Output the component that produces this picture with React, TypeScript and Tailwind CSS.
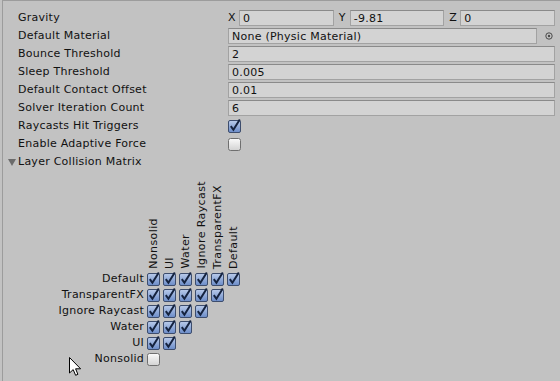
import React from 'react';

const LAYERS = ['Default', 'TransparentFX', 'Ignore Raycast', 'Water', 'UI', 'Nonsolid'];

function Checkbox({ checked }: { checked: boolean }) {
  if (checked) {
    return (
      <svg width="13" height="13" viewBox="0 0 13 13" className="block shrink-0 overflow-visible">
        <defs>
          <linearGradient id="cbOn" x1="0" y1="0" x2="0" y2="1">
            <stop offset="0" stopColor="#b9cbea" />
            <stop offset="1" stopColor="#6a8bc8" />
          </linearGradient>
        </defs>
        <rect x="0.5" y="0.5" width="12" height="12" rx="1.5" fill="url(#cbOn)" stroke="#3d4d6d" />
        <path d="M2.8 6.2 L5.4 9.8 L11.8 -0.6" fill="none" stroke="#15233f" strokeWidth="2" strokeLinejoin="miter" />
      </svg>
    );
  }
  return (
    <svg width="13" height="13" viewBox="0 0 13 13" className="block shrink-0">
      <defs>
        <linearGradient id="cbOff" x1="0" y1="0" x2="0" y2="1">
          <stop offset="0" stopColor="#fbfbfb" />
          <stop offset="1" stopColor="#d2d2d2" />
        </linearGradient>
      </defs>
      <rect x="0.5" y="0.5" width="12" height="12" rx="2" fill="url(#cbOff)" stroke="#6f6f6f" />
    </svg>
  );
}

function Field({ value, className = '' }: { value: string; className?: string }) {
  return (
    <div
      className={`h-[16px] flex items-center bg-[#d3d3d3] border border-[#a2a2a2] border-t-[#8a8a8a] pl-[3px] leading-none whitespace-nowrap overflow-hidden ${className}`}
    >
      {value}
    </div>
  );
}

function Row({ label, children }: { label: string; children: React.ReactNode }) {
  return (
    <div className="flex items-center h-[18px]">
      <div className="w-[210px] shrink-0 whitespace-nowrap">{label}</div>
      <div className="flex-1 flex items-center">{children}</div>
    </div>
  );
}

export default function App() {
  return (
    <div className="w-[560px] h-[381px] overflow-hidden bg-[#c2c2c2] text-[11px] tracking-[0.25px] text-[#111] font-['DejaVu_Sans',sans-serif] relative">
      <div className="h-full ml-[2px] border-l border-t border-[#9c9c9c] pt-[8px] pl-[15px] pr-[5px]">
        <Row label="Gravity">
          <div className="flex-1 flex gap-[5px]">
            {[
              ['X', '0'],
              ['Y', '-9.81'],
              ['Z', '0'],
            ].map(([axis, v]) => (
              <div key={axis} className="flex-1 flex items-center">
                <span className="w-[11px] shrink-0">{axis}</span>
                <Field value={v} className="flex-1" />
              </div>
            ))}
          </div>
        </Row>
        <Row label="Default Material">
          <Field value="None (Physic Material)" className="flex-1" />
          <div className="w-[18px] shrink-0 flex justify-end pr-[2px]">
            <svg width="8" height="8" viewBox="0 0 8 8">
              <circle cx="4" cy="4" r="3.2" fill="none" stroke="#4a4a4a" strokeWidth="1" />
              <circle cx="4" cy="4" r="1.2" fill="#4a4a4a" />
            </svg>
          </div>
        </Row>
        <Row label="Bounce Threshold">
          <Field value="2" className="flex-1" />
        </Row>
        <Row label="Sleep Threshold">
          <Field value="0.005" className="flex-1" />
        </Row>
        <Row label="Default Contact Offset">
          <Field value="0.01" className="flex-1" />
        </Row>
        <Row label="Solver Iteration Count">
          <Field value="6" className="flex-1" />
        </Row>
        <Row label="Raycasts Hit Triggers">
          <Checkbox checked />
        </Row>
        <Row label="Enable Adaptive Force">
          <Checkbox checked={false} />
        </Row>
        <div className="flex items-center h-[18px]">
          <div className="w-[11px] -ml-[11px] flex justify-start pl-[1px]">
            <svg width="8" height="7" viewBox="0 0 8 7">
              <path d="M0 0 H8 L4 7 Z" fill="#6b6b6b" />
            </svg>
          </div>
          <span>Layer Collision Matrix</span>
        </div>

        {/* Collision matrix */}
        <div>
          <div className="flex items-end h-[98px]">
            <div className="w-[129px] shrink-0" />
            {[...LAYERS].reverse().map((l) => (
              <div key={l} className="w-[16px] shrink-0 flex justify-center pr-[3px]">
                <span className="[writing-mode:vertical-rl] rotate-180 whitespace-nowrap leading-[13px] tracking-[0.4px]">{l}</span>
              </div>
            ))}
          </div>
          <div className="mt-[2px]">
            {LAYERS.map((l, i) => (
              <div key={l} className="flex items-center h-[16px]">
                <div className="w-[126px] shrink-0 text-right whitespace-nowrap mr-[3px]">{l}</div>
                {Array.from({ length: LAYERS.length - i }).map((_, j) => (
                  <div key={j} className="w-[16px] shrink-0">
                    <Checkbox checked={l !== 'Nonsolid'} />
                  </div>
                ))}
              </div>
            ))}
          </div>
        </div>
      </div>

      {/* mouse pointer */}
      <svg width="13" height="20" viewBox="0 0 13 20" className="absolute left-[69px] top-[357px]">
        <path d="M0.5 0.5 V16 L4.2 12.6 L6.6 18.3 L8.9 17.3 L6.6 11.8 H11.6 Z" fill="#fff" stroke="#000" strokeWidth="1" strokeLinejoin="round" />
      </svg>
    </div>
  );
}
